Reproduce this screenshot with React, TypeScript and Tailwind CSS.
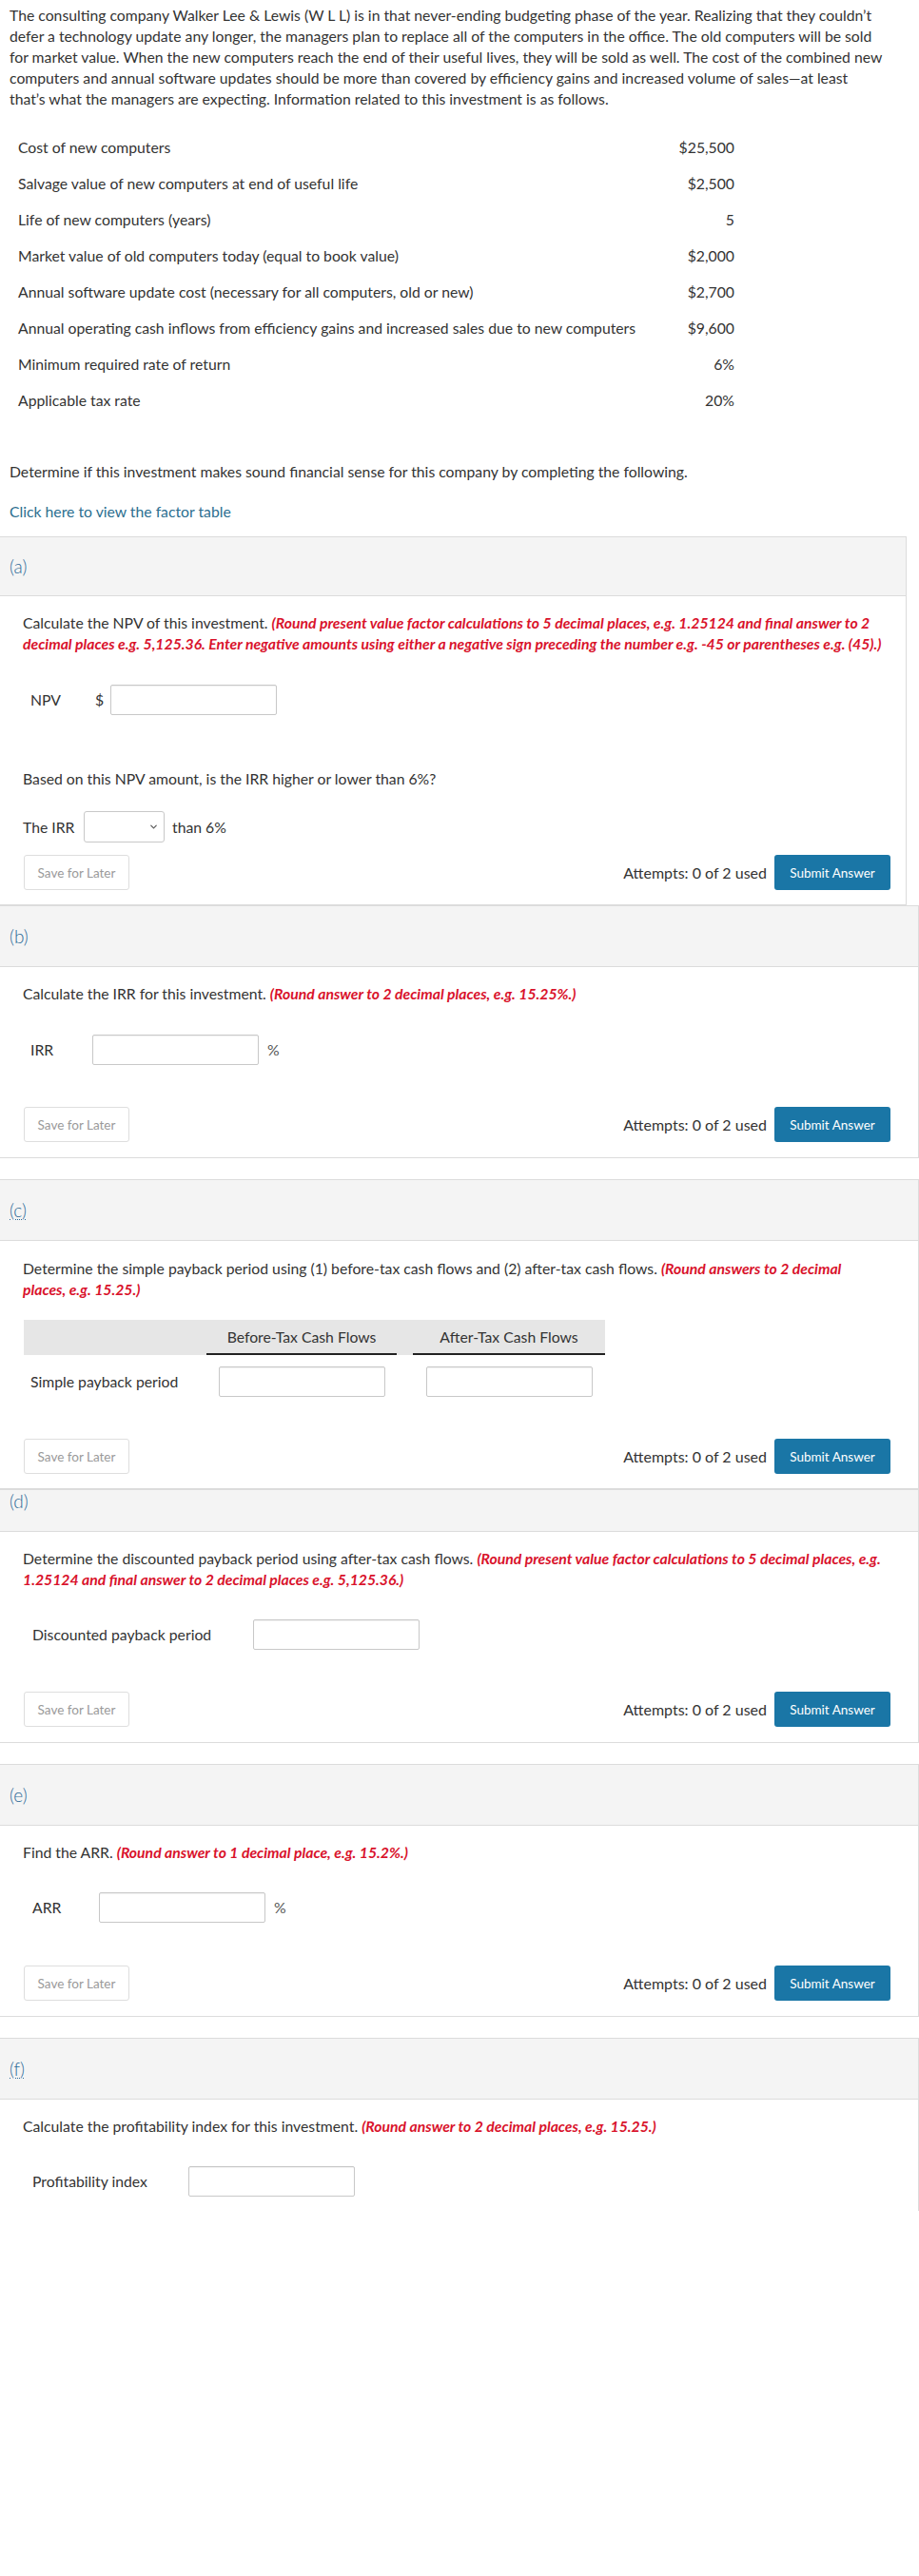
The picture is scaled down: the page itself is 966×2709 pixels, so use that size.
import { ChevronDown } from "lucide-react";

const facts: [string, string][] = [
  ["Cost of new computers", "$25,500"],
  ["Salvage value of new computers at end of useful life", "$2,500"],
  ["Life of new computers (years)", "5"],
  ["Market value of old computers today (equal to book value)", "$2,000"],
  ["Annual software update cost (necessary for all computers, old or new)", "$2,700"],
  ["Annual operating cash inflows from efficiency gains and increased sales due to new computers", "$9,600"],
  ["Minimum required rate of return", "6%"],
  ["Applicable tax rate", "20%"],
];

function Hint({ children }: { children: React.ReactNode }) {
  return <span className="font-bold italic text-[#d9122b]">{children}</span>;
}

function Field({ className = "" }: { className?: string }) {
  return (
    <div
      className={`h-[32px] w-[175px] rounded-[2px] border border-[#c8c8c8] bg-white shadow-[inset_0_1px_1px_rgba(0,0,0,0.06)] ${className}`}
    />
  );
}

function Actions({ className = "" }: { className?: string }) {
  return (
    <div className={`ml-[25px] flex w-[911px] items-center justify-between ${className}`}>
      <button className="h-[37px] w-[111px] rounded-[3px] border border-[#dedede] bg-white text-[13.5px] text-[#9a9a9a]">
        Save for Later
      </button>
      <div className="flex items-center gap-[8px]">
        <span className="text-[16px] text-[#333]">Attempts: 0 of 2 used</span>
        <button className="h-[37px] w-[122px] rounded-[3px] bg-[#1a76a6] text-[13.5px] text-white">
          Submit Answer
        </button>
      </div>
    </div>
  );
}

function Header({
  label,
  focus = false,
  className = "h-[65px] items-center",
}: {
  label: string;
  focus?: boolean;
  className?: string;
}) {
  return (
    <div className={`flex border-y border-[#dcdcdc] bg-[#f4f4f4] pl-[10px] ${className}`}>
      <span
        className={`text-[19px] font-light text-[#2e6b98] ${
          focus ? "underline decoration-dotted decoration-1 underline-offset-2" : ""
        }`}
      >
        {label}
      </span>
    </div>
  );
}

export default function App() {
  return (
    <div className="min-h-[2709px] w-full bg-white font-['Lato',sans-serif] text-[15.75px] leading-[22px] text-[#333]">
      {/* Problem statement */}
      <p className="w-[960px] pl-[10px] pt-[5px]">
        The consulting company Walker Lee &amp; Lewis (W L L) is in that never-ending budgeting phase of the year. Realizing that they couldn’t
        <br />
        defer a technology update any longer, the managers plan to replace all of the computers in the office. The old computers will be sold
        <br />
        for market value. When the new computers reach the end of their useful lives, they will be sold as well. The cost of the combined new
        <br />
        computers and annual software updates should be more than covered by efficiency gains and increased volume of sales—at least
        <br />
        that’s what the managers are expecting. Information related to this investment is as follows.
      </p>

      <div className="ml-[19px] mt-[21px] w-[753px]">
        {facts.map(([k, v]) => (
          <div key={k} className="flex h-[38px] items-center justify-between">
            <span>{k}</span>
            <span>{v}</span>
          </div>
        ))}
      </div>

      <p className="mt-[45px] pl-[10px]">
        Determine if this investment makes sound financial sense for this company by completing the following.
      </p>
      <p className="mt-[20px] pl-[10px] text-[#2b6e8f]">Click here to view the factor table</p>

      {/* (a) */}
      <div className="mt-[15px] w-[953px] border-b border-r border-[#dcdcdc]">
        <Header label="(a)" className="h-[63px] items-center" />
        <p className="mt-[17px] pl-[24px] pr-[20px]">
          Calculate the NPV of this investment.{" "}
          <Hint>
            (Round present value factor calculations to 5 decimal places, e.g. 1.25124 and final answer to 2 decimal places e.g. 5,125.36.
            Enter negative amounts using either a negative sign preceding the number e.g. -45 or parentheses e.g. (45).)
          </Hint>
        </p>
        <div className="mt-[32px] flex items-center pl-[32px]">
          <span className="w-[68px]">NPV</span>
          <span className="w-[16px]">$</span>
          <Field />
        </div>
        <p className="mt-[56px] pl-[24px]">Based on this NPV amount, is the IRR higher or lower than 6%?</p>
        <div className="mt-[23px] flex items-center pl-[24px]">
          <span className="w-[64px]">The IRR</span>
          <div className="flex h-[33px] w-[85px] items-center justify-end rounded-[3px] border border-[#c8c8c8] bg-white pr-[5px]">
            <ChevronDown size={11} strokeWidth={2.5} className="text-[#555]" />
          </div>
          <span className="ml-[8px]">than 6%</span>
        </div>
        <Actions className="mb-[15px] mt-[13px]" />
      </div>

      {/* (b) */}
      <div className="w-[966px] border-b border-r border-[#dcdcdc]">
        <Header label="(b)" />
        <p className="mt-[17px] pl-[24px]">
          Calculate the IRR for this investment. <Hint>(Round answer to 2 decimal places, e.g. 15.25%.)</Hint>
        </p>
        <div className="mt-[32px] flex items-center pl-[32px]">
          <span className="w-[65px]">IRR</span>
          <Field />
          <span className="ml-[9px] text-[#555]">%</span>
        </div>
        <Actions className="mb-[16px] mt-[44px]" />
      </div>

      {/* (c) */}
      <div className="mt-[22px] w-[966px] border-b border-r border-[#dcdcdc]">
        <Header label="(c)" focus />
        <p className="mt-[18px] pl-[24px] pr-[40px]">
          Determine the simple payback period using (1) before-tax cash flows and (2) after-tax cash flows.{" "}
          <Hint>(Round answers to 2 decimal places, e.g. 15.25.)</Hint>
        </p>
        <div className="ml-[25px] mt-[21px] w-[611px]">
          <div className="grid h-[37px] grid-cols-[192px_200px_17px_202px] bg-[#e6e6e6]">
            <div />
            <div className="flex items-center justify-center border-b-2 border-[#222]">Before-Tax Cash Flows</div>
            <div />
            <div className="flex items-center justify-center border-b-2 border-[#222]">After-Tax Cash Flows</div>
          </div>
          <div className="mt-[12px] grid grid-cols-[192px_200px_17px_202px] items-center">
            <span className="pl-[7px]">Simple payback period</span>
            <div className="flex justify-center">
              <Field />
            </div>
            <div />
            <div className="flex justify-center">
              <Field />
            </div>
          </div>
        </div>
        <Actions className="mb-[15px] mt-[44px]" />
      </div>

      {/* (d) */}
      <div className="w-[966px] border-b border-r border-[#dcdcdc]">
        <Header label="(d)" className="h-[45px] items-start pt-[1px]" />
        <p className="mt-[17px] pl-[24px] pr-[30px]">
          Determine the discounted payback period using after-tax cash flows.{" "}
          <Hint>
            (Round present value factor calculations to 5 decimal places, e.g. 1.25124 and final answer to 2 decimal places e.g. 5,125.36.)
          </Hint>
        </p>
        <div className="mt-[31px] flex items-center pl-[34px]">
          <span className="w-[232px]">Discounted payback period</span>
          <Field />
        </div>
        <Actions className="mb-[16px] mt-[44px]" />
      </div>

      {/* (e) */}
      <div className="mt-[22px] w-[966px] border-b border-r border-[#dcdcdc]">
        <Header label="(e)" />
        <p className="mt-[17px] pl-[24px]">
          Find the ARR. <Hint>(Round answer to 1 decimal place, e.g. 15.2%.)</Hint>
        </p>
        <div className="mt-[31px] flex items-center pl-[34px]">
          <span className="w-[70px]">ARR</span>
          <Field />
          <span className="ml-[9px] text-[#555]">%</span>
        </div>
        <Actions className="mb-[16px] mt-[45px]" />
      </div>

      {/* (f) */}
      <div className="mt-[22px] w-[966px] border-r border-[#dcdcdc] pb-[15px]">
        <Header label="(f)" focus />
        <p className="mt-[17px] pl-[24px]">
          Calculate the profitability index for this investment. <Hint>(Round answer to 2 decimal places, e.g. 15.25.)</Hint>
        </p>
        <div className="mt-[31px] flex items-center pl-[34px]">
          <span className="w-[164px]">Profitability index</span>
          <Field />
        </div>
      </div>
    </div>
  );
}
